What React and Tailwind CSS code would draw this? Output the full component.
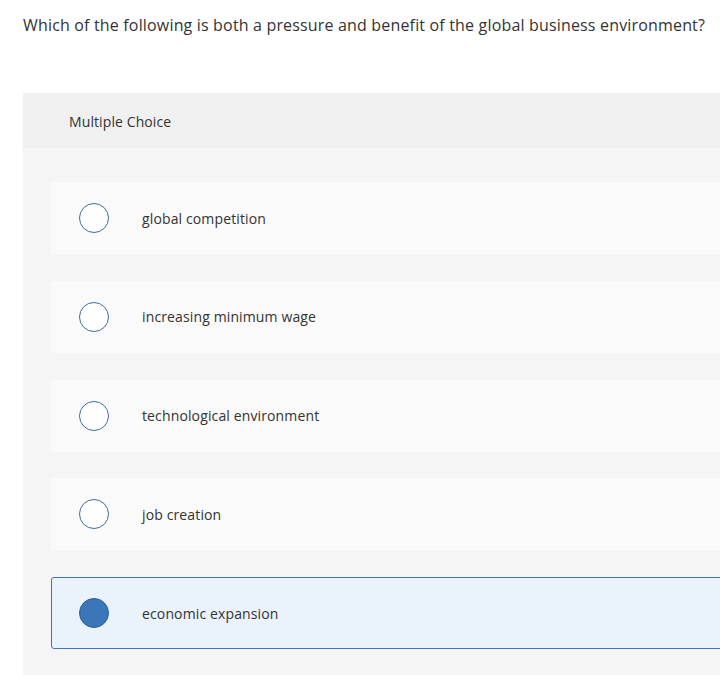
import React from 'react'

const options = [
  { label: 'global competition', selected: false },
  { label: 'increasing minimum wage', selected: false },
  { label: 'technological environment', selected: false },
  { label: 'job creation', selected: false },
  { label: 'economic expansion', selected: true },
]

function Radio({ checked }) {
  return (
    <span
      className={
        checked
          ? 'block h-[30px] w-[30px] rounded-full border border-[#2d5f9a] bg-[#3b76b9]'
          : 'block h-[30px] w-[30px] rounded-full border border-[#3d6c9f] bg-white'
      }
    />
  )
}

export default function App() {
  return (
    <div className="h-[675px] w-[720px] overflow-hidden bg-white text-[#333] font-['Open_Sans',sans-serif]">
      <p className="pl-[23px] pt-[14px] text-[16px] leading-[22px] tracking-[0.17px] whitespace-nowrap">
        Which of the following is both a pressure and benefit of the global business environment?
      </p>

      <div className="ml-[23px] mt-[57px] w-[760px] bg-[#f5f5f5]">
        <div className="flex h-[55px] items-center bg-[#f0f0f0] pl-[46px] pt-[2px] text-[14px] tracking-[0.1px]">
          Multiple Choice
        </div>

        <div className="flex flex-col gap-[26.75px] pl-[28px] pt-[34px] pb-[30px]">
          {options.map((o) => (
            <div
              key={o.label}
              className={
                o.selected
                  ? 'flex h-[72px] items-center rounded-[3px] border border-[#3b76b9] bg-[#eaf2fb]'
                  : 'flex h-[72px] items-center rounded-[3px] border border-transparent bg-[#fafafa]'
              }
            >
              <div className="ml-[27px] mr-[33px]">
                <Radio checked={o.selected} />
              </div>
              <span className="text-[14px] tracking-[0.13px]">{o.label}</span>
            </div>
          ))}
        </div>
      </div>
    </div>
  )
}
